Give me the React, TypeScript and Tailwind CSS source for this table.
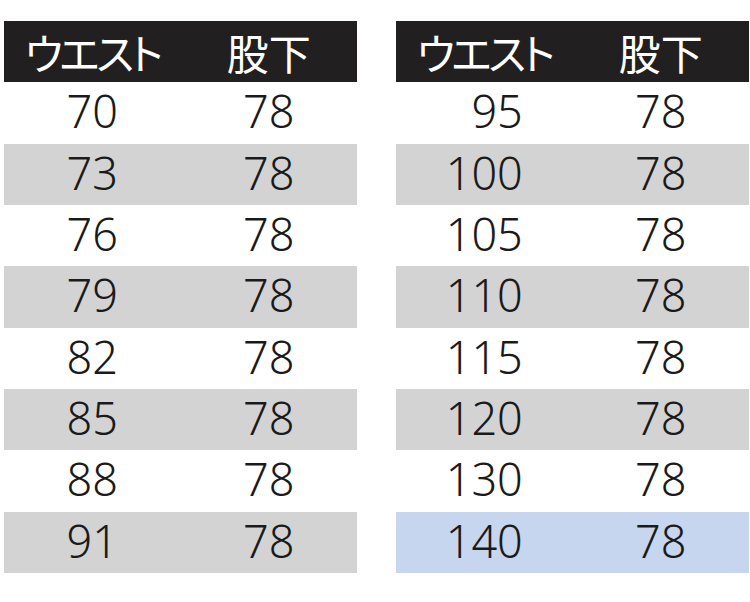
const left = ["70", "73", "76", "79", "82", "85", "88", "91"]
const right = ["\u200795", "100", "105", "110", "115", "120", "130", "140"]

const SizeTable = ({ waists, highlightLast }: { waists: string[]; highlightLast?: boolean }) => {
  return (
    <div className="w-[353px] h-[552px] grid grid-rows-9">
      <div className="grid grid-cols-2 items-center bg-[#221f20] text-white text-[42px] leading-none font-['Noto_Sans_CJK_JP',sans-serif]">
        <span className="text-center [font-feature-settings:'palt'] tracking-[-0.08em]">ウエスト</span>
        <span className="text-center">股下</span>
      </div>
      {waists.map((w, i) => {
        const bg =
          highlightLast && i === waists.length - 1
            ? "bg-[#c6d6ee]"
            : i % 2 === 1
              ? "bg-[#d3d3d4]"
              : "bg-white"
        return (
          <div
            key={w}
            className={`grid grid-cols-2 items-center pb-[4px] text-[#1a1a1a] text-[45px] font-[350] leading-none font-['Noto_Sans','Open_Sans',sans-serif] ${bg}`}
          >
            <span className="text-center tabular-nums">{w}</span>
            <span className="text-center tabular-nums">78</span>
          </div>
        )
      })}
    </div>
  )
}

export default function App() {
  return (
    <div className="w-[750px] h-[602px] bg-white pt-[21px] pl-[4px]">
      <div className="flex gap-[39px]">
        <SizeTable waists={left} />
        <SizeTable waists={right} highlightLast />
      </div>
    </div>
  )
}
